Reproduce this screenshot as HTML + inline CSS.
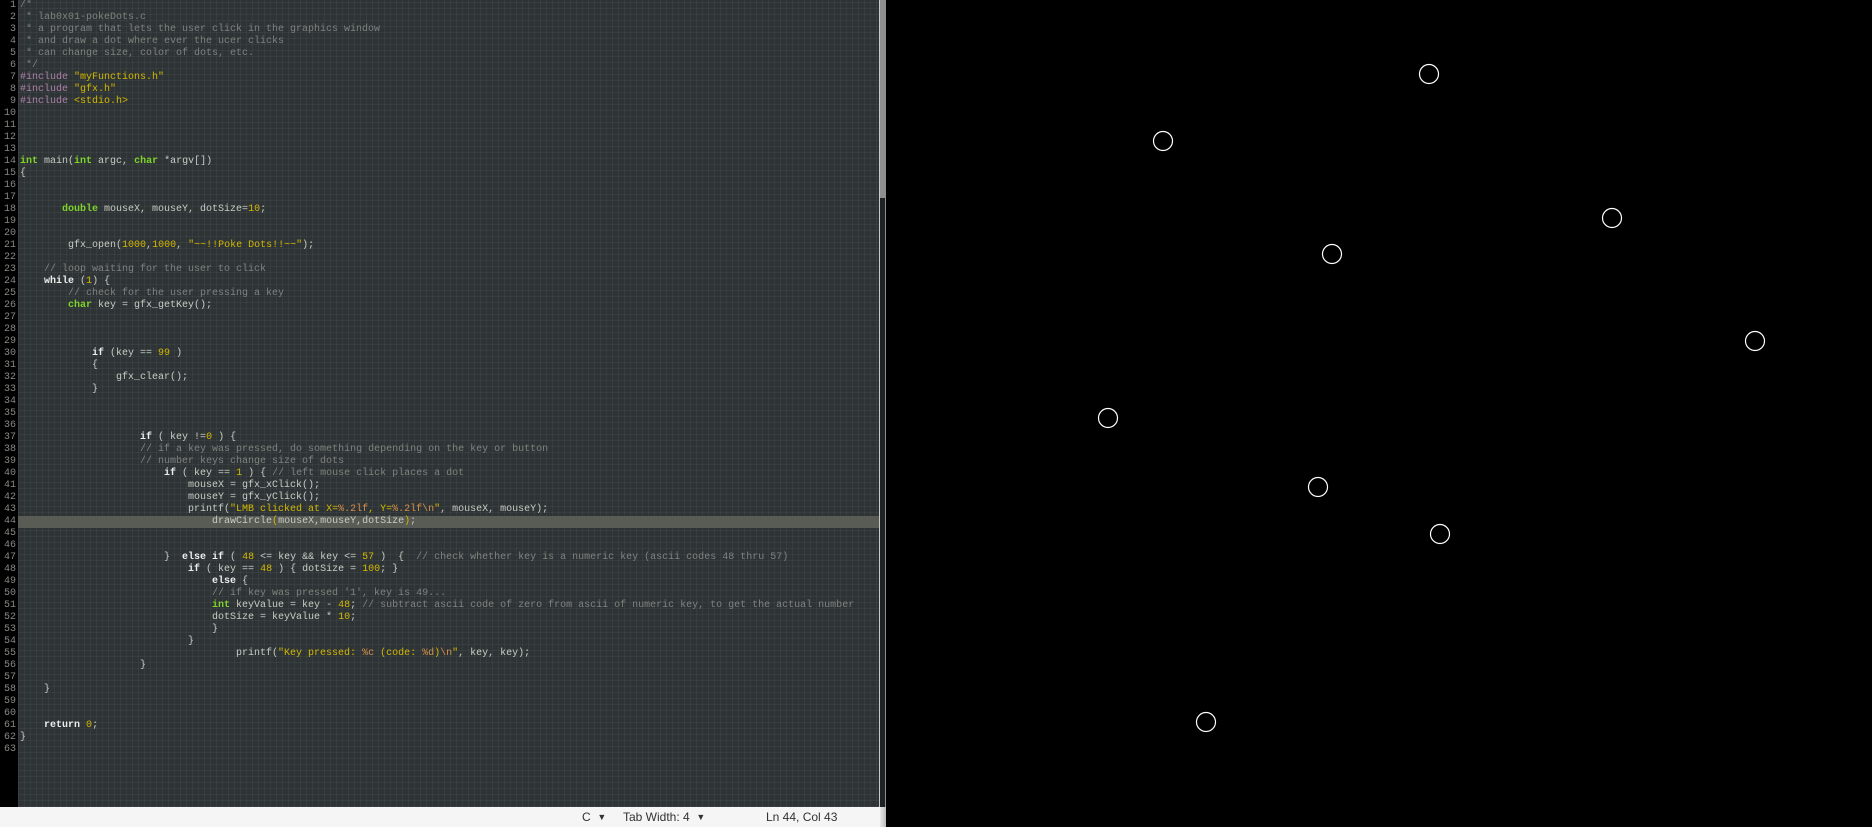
<!DOCTYPE html>
<html><head><meta charset="utf-8">
<style>
html,body{margin:0;padding:0;background:#000;width:1872px;height:827px;overflow:hidden}
#ed{position:absolute;left:0;top:0;width:879px;height:807px;background-color:#2e3436;
background-image:repeating-linear-gradient(0deg,rgba(255,255,255,0.045) 0 1px,transparent 1px 6px),repeating-linear-gradient(90deg,rgba(255,255,255,0.045) 0 1px,transparent 1px 6px);}
#gut{position:absolute;left:0;top:0;width:18px;height:807px;background:#000}
#hl{position:absolute;left:18px;top:516px;width:861px;height:12px;background:#595b55}
pre{margin:0;font-family:"Liberation Mono","DejaVu Sans Mono",monospace;font-size:10px;line-height:12px;position:absolute;top:0}
#nums{left:0;width:16px;text-align:right;color:#888a85}
#code{left:20px;color:#c8ccc4}
.c{color:#7f827d}.k{color:#eeeeec;font-weight:bold}.t{color:#7fd32a;font-weight:bold}.s{color:#d4b800}.n{color:#d4b800}.p{color:#ad7fa8}.e{color:#d9904a}
#sb{position:absolute;left:879px;top:0;width:7px;height:807px;background:#8f8f8f;border-left:1px solid #c8c8c8;box-sizing:border-box}
#sbd{position:absolute;left:880px;top:198px;width:5px;height:609px;background:#1e2224}
#st{position:absolute;left:0;top:807px;width:880px;height:20px;background:#f5f5f5;font-family:"Liberation Sans",sans-serif;font-size:12px;color:#333}
#st2{position:absolute;left:880px;top:807px;width:6px;height:20px;background:linear-gradient(90deg,#e8e8e8,#bbb)}
#st span{position:absolute;top:3px}
#st i{font-style:normal;font-size:9px;position:relative;top:-1px}
</style></head><body>
<div id="ed"></div><div id="gut"></div><div id="hl"></div>
<pre id="nums">1
2
3
4
5
6
7
8
9
10
11
12
13
14
15
16
17
18
19
20
21
22
23
24
25
26
27
28
29
30
31
32
33
34
35
36
37
38
39
40
41
42
43
44
45
46
47
48
49
50
51
52
53
54
55
56
57
58
59
60
61
62
63</pre>
<pre id="code"><span class="c">/*
 * lab0x01-pokeDots.c
 * a program that lets the user click in the graphics window
 * and draw a dot where ever the ucer clicks
 * can change size, color of dots, etc.
 */</span>
<span class="p">#include </span><span class="s">"myFunctions.h"</span>
<span class="p">#include </span><span class="s">"gfx.h"</span>
<span class="p">#include </span><span class="s">&lt;stdio.h&gt;</span>




<span class="t">int</span> main(<span class="t">int</span> argc, <span class="t">char</span> *argv[])
{


       <span class="t">double</span> mouseX, mouseY, dotSize=<span class="n">10</span>;


        gfx_open(<span class="n">1000</span>,<span class="n">1000</span>, <span class="s">"~~!!Poke Dots!!~~"</span>);

    <span class="c">// loop waiting for the user to click</span>
    <span class="k">while</span> (<span class="n">1</span>) {
        <span class="c">// check for the user pressing a key</span>
        <span class="t">char</span> key = gfx_getKey();



            <span class="k">if</span> (key == <span class="n">99</span> )
            {
                gfx_clear();
            }



                    <span class="k">if</span> ( key !=<span class="n">0</span> ) {
                    <span class="c">// if a key was pressed, do something depending on the key or button</span>
                    <span class="c">// number keys change size of dots</span>
                        <span class="k">if</span> ( key == <span class="n">1</span> ) { <span class="c">// left mouse click places a dot</span>
                            mouseX = gfx_xClick();
                            mouseY = gfx_yClick();
                            printf(<span class="s">"LMB clicked at X=<span class="e">%.2lf</span>, Y=<span class="e">%.2lf\n</span>"</span>, mouseX, mouseY);
                                drawCircle<span class="s">(</span>mouseX,mouseY,dotSize<span class="s">)</span>;


                        }  <span class="k">else if</span> ( <span class="n">48</span> &lt;= key &amp;&amp; key &lt;= <span class="n">57</span> )  {  <span class="c">// check whether key is a numeric key (ascii codes 48 thru 57)</span>
                            <span class="k">if</span> ( key == <span class="n">48</span> ) { dotSize = <span class="n">100</span>; }
                                <span class="k">else</span> {
                                <span class="c">// if key was pressed '1', key is 49...</span>
                                <span class="t">int</span> keyValue = key - <span class="n">48</span>; <span class="c">// subtract ascii code of zero from ascii of numeric key, to get the actual number</span>
                                dotSize = keyValue * <span class="n">10</span>;
                                }
                            }
                                    printf(<span class="s">"Key pressed: <span class="e">%c</span> (code: <span class="e">%d</span>)<span class="e">\n</span>"</span>, key, key);
                    }

    }


    <span class="k">return</span> <span class="n">0</span>;
}
</pre>
<div id="sb"></div><div id="sbd"></div>
<div id="st"><span style="left:582px">C&nbsp;&nbsp;<i>&#9660;</i></span><span style="left:623px">Tab Width: 4&nbsp;&nbsp;<i>&#9660;</i></span><span style="left:766px">Ln 44, Col 43</span></div>
<div id="st2"></div>
<svg style="position:absolute;left:0;top:0" width="1872" height="827">
<g fill="none" stroke="#fff" stroke-width="1.2">
<circle cx="1429" cy="74" r="9.5"/>
<circle cx="1163" cy="141" r="9.5"/>
<circle cx="1612" cy="218" r="9.5"/>
<circle cx="1332" cy="254" r="9.5"/>
<circle cx="1755" cy="341" r="9.5"/>
<circle cx="1108" cy="418" r="9.5"/>
<circle cx="1318" cy="487" r="9.5"/>
<circle cx="1440" cy="534" r="9.5"/>
<circle cx="1206" cy="722" r="9.5"/>
</g></svg>
</body></html>
